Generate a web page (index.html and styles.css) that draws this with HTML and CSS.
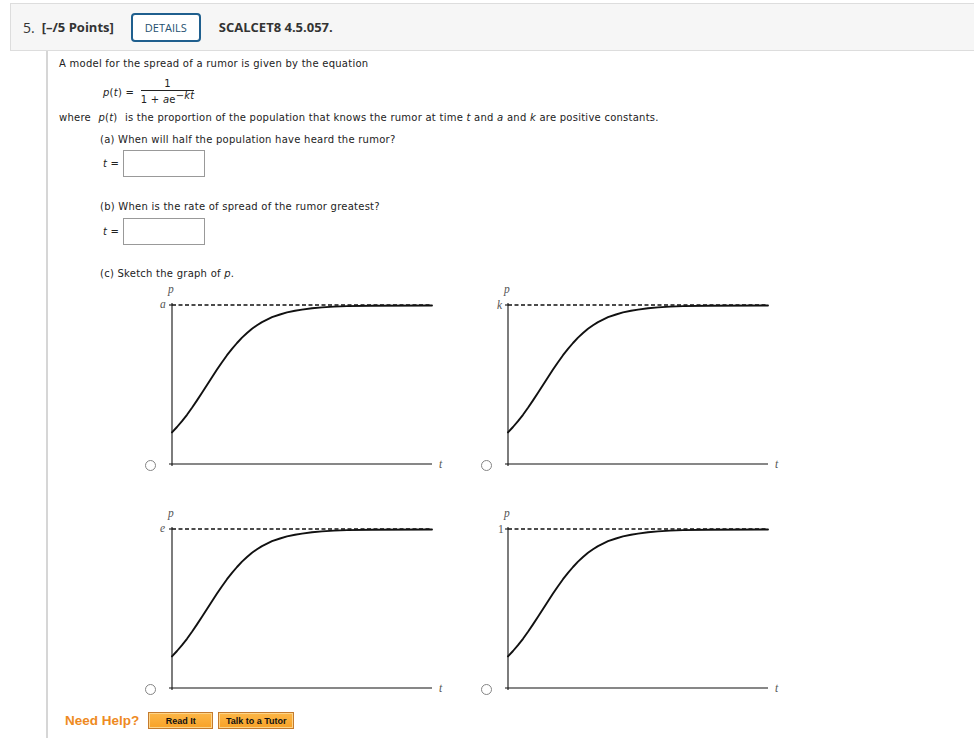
FILE: index.html
```html
<!DOCTYPE html>
<html>
<head>
<meta charset="utf-8">
<link rel="stylesheet" href="styles.css">
</head>
<body>
<div class="header">
  <span class="qnum">5.</span>
  <span class="points">[–/5 Points]</span>
  <span class="details">DETAILS</span>
  <span class="code">SCALCET8 4.5.057.</span>
</div>
<div class="question">
  <p class="line">A model for the spread of a rumor is given by the equation</p>
  <div class="equation">
    <span class="lhs"><i>p</i>(<i>t</i>) =</span>
    <span class="frac">
      <span class="num">1</span>
      <span class="den">1 + <i>a</i>e<sup>−<i>kt</i></sup></span>
    </span>
  </div>
  <p class="line where">where <span class="m"><i>p</i>(<i>t</i>)</span> is the proportion of the population that knows the rumor at time <i>t</i> and <i>a</i> and <i>k</i> are positive constants.</p>
  <p class="line part part-a">(a) When will half the population have heard the rumor?</p>
  <div class="answer"><span class="var"><i>t</i> =</span><span class="box"></span></div>
  <p class="line part part-b">(b) When is the rate of spread of the rumor greatest?</p>
  <div class="answer answer-b"><span class="var"><i>t</i> =</span><span class="box"></span></div>
  <p class="line part part-c">(c) Sketch the graph of <i>p</i>.</p>
  <div class="graphs">
    <div class="cell">
      <span class="radio"></span>
      <svg class="graph" width="292" height="190" viewBox="0 0 292 190">
        <line class="axis" x1="14" y1="22" x2="14" y2="185"/>
        <line class="axis" x1="11" y1="183" x2="274" y2="183"/>
        <line class="axis" x1="11" y1="24" x2="14" y2="24"/>
        <line class="dash" x1="14" y1="24" x2="274" y2="24"/>
        <polyline class="curve" points="14,151.4 19,146 24,140.2 29,133.8 34,126.8 39,119.4 44,111.8 49,104 54,96.2 59,88.6 64,81.2 69,74.2 74,67.8 79,62 84,56.6 89,52 94,47.8 99,44.2 104,41.1 114,36.2 122,33.5 129,31.4 137,29.8 144,28.6 154,27.2 164,26.4 176,25.6 189,25.1 214,24.7 274,24.5"/>
        <text class="lbl" x="10" y="12">p</text>
        <text class="lbl" x="2" y="27">a</text>
        <text class="lbl" x="281" y="187">t</text>
      </svg>
    </div>
    <div class="cell">
      <span class="radio"></span>
      <svg class="graph" width="292" height="190" viewBox="0 0 292 190">
        <line class="axis" x1="14" y1="22" x2="14" y2="185"/>
        <line class="axis" x1="11" y1="183" x2="274" y2="183"/>
        <line class="axis" x1="11" y1="24" x2="14" y2="24"/>
        <line class="dash" x1="14" y1="24" x2="274" y2="24"/>
        <polyline class="curve" points="14,151.4 19,146 24,140.2 29,133.8 34,126.8 39,119.4 44,111.8 49,104 54,96.2 59,88.6 64,81.2 69,74.2 74,67.8 79,62 84,56.6 89,52 94,47.8 99,44.2 104,41.1 114,36.2 122,33.5 129,31.4 137,29.8 144,28.6 154,27.2 164,26.4 176,25.6 189,25.1 214,24.7 274,24.5"/>
        <text class="lbl" x="10" y="12">p</text>
        <text class="lbl" x="3" y="28">k</text>
        <text class="lbl" x="281" y="187">t</text>
      </svg>
    </div>
    <div class="cell">
      <span class="radio"></span>
      <svg class="graph" width="292" height="190" viewBox="0 0 292 190">
        <line class="axis" x1="14" y1="22" x2="14" y2="185"/>
        <line class="axis" x1="11" y1="183" x2="274" y2="183"/>
        <line class="axis" x1="11" y1="24" x2="14" y2="24"/>
        <line class="dash" x1="14" y1="24" x2="274" y2="24"/>
        <polyline class="curve" points="14,151.4 19,146 24,140.2 29,133.8 34,126.8 39,119.4 44,111.8 49,104 54,96.2 59,88.6 64,81.2 69,74.2 74,67.8 79,62 84,56.6 89,52 94,47.8 99,44.2 104,41.1 114,36.2 122,33.5 129,31.4 137,29.8 144,28.6 154,27.2 164,26.4 176,25.6 189,25.1 214,24.7 274,24.5"/>
        <text class="lbl" x="10" y="12">p</text>
        <text class="lbl" x="2" y="27">e</text>
        <text class="lbl" x="281" y="187">t</text>
      </svg>
    </div>
    <div class="cell">
      <span class="radio"></span>
      <svg class="graph" width="292" height="190" viewBox="0 0 292 190">
        <line class="axis" x1="14" y1="22" x2="14" y2="185"/>
        <line class="axis" x1="11" y1="183" x2="274" y2="183"/>
        <line class="axis" x1="11" y1="24" x2="14" y2="24"/>
        <line class="dash" x1="14" y1="24" x2="274" y2="24"/>
        <polyline class="curve" points="14,151.4 19,146 24,140.2 29,133.8 34,126.8 39,119.4 44,111.8 49,104 54,96.2 59,88.6 64,81.2 69,74.2 74,67.8 79,62 84,56.6 89,52 94,47.8 99,44.2 104,41.1 114,36.2 122,33.5 129,31.4 137,29.8 144,28.6 154,27.2 164,26.4 176,25.6 189,25.1 214,24.7 274,24.5"/>
        <text class="lbl" x="10" y="12">p</text>
        <text class="num-lbl" x="4" y="28">1</text>
        <text class="lbl" x="281" y="187">t</text>
      </svg>
    </div>
  </div>
  <div class="help">
    <span class="need">Need Help?</span>
    <span class="btn btn-read">Read It</span>
    <span class="btn btn-tutor">Talk to a Tutor</span>
  </div>
</div>
</body>
</html>
```
FILE: styles.css
```css
html, body {
  margin: 0;
  padding: 0;
  background: #ffffff;
}
body {
  width: 974px;
  height: 738px;
  overflow: hidden;
}
.header {
  margin: 3px 0 0 10px;
  height: 46px;
  border: 1px solid #dddddd;
  border-right: none;
  background: #f6f6f6;
  display: flex;
  align-items: center;
  padding-left: 12px;
  font-family: "Open Sans", "Liberation Sans", sans-serif;
  color: #333333;
}
.qnum {
  font-size: 14px;
  margin-right: 7px;
}
.points {
  font-size: 13px;
  font-weight: bold;
  margin-right: 17px;
}
.details {
  box-sizing: border-box;
  width: 70px;
  height: 29px;
  border: 2px solid #1f5f8e;
  border-radius: 4px;
  display: flex;
  align-items: center;
  justify-content: center;
  font-size: 11px;
  color: #24506f;
  background: #ffffff;
  margin-right: 18px;
}
.code {
  font-size: 13px;
  font-weight: bold;
}
.question {
  margin-left: 46px;
  border-left: 2px solid #d6d6d6;
  padding: 6px 0 12px 11px;
  font-family: "DejaVu Sans", Verdana, sans-serif;
  font-size: 10px;
  letter-spacing: 0.25px;
  color: #222222;
}
.line {
  margin: 0;
  line-height: 14px;
  white-space: nowrap;
}
.equation {
  margin: 6px 0 0 44px;
  display: flex;
  align-items: center;
}
.lhs {
  line-height: 14px;
  margin-right: 7px;
  padding-top: 1px;
}
.frac {
  display: inline-flex;
  flex-direction: column;
  align-items: center;
  width: 53px;
}
.num {
  line-height: 13px;
  width: 100%;
  text-align: center;
  border-bottom: 1px solid #222222;
}
.den {
  line-height: 14px;
  padding-top: 2px;
  white-space: nowrap;
}
.den sup {
  font-size: 10px;
  line-height: 0;
  vertical-align: 4px;
}
.where {
  margin-top: 4px;
}
.m {
  margin: 0 4px 0 4px;
}
.part {
  margin-left: 41px;
}
.part-a {
  margin-top: 8px;
}
.part-b {
  margin-top: 23px;
}
.part-c {
  margin-top: 22px;
}
.answer {
  display: flex;
  align-items: center;
  margin: 3px 0 0 44px;
}
.answer-b {
  margin-top: 4px;
}
.var {
  width: 20px;
  line-height: 14px;
}
.box {
  box-sizing: border-box;
  width: 82px;
  height: 27px;
  border: 1px solid #999999;
  background: #ffffff;
}
.graphs {
  margin-left: 86px;
  display: grid;
  grid-template-columns: 305px 305px;
  column-gap: 31px;
  row-gap: 34px;
}
.cell {
  display: flex;
  align-items: flex-end;
}
.radio {
  box-sizing: border-box;
  width: 11px;
  height: 11px;
  border: 1px solid #858585;
  border-radius: 50%;
  background: #ffffff;
  margin-right: 2px;
  flex: none;
}
.graph {
  display: block;
  flex: none;
}
.axis {
  stroke: #111111;
  stroke-width: 1.1;
}
.dash {
  stroke: #111111;
  stroke-width: 1.5;
  stroke-dasharray: 4 2.5;
}
.curve {
  fill: none;
  stroke: #111111;
  stroke-width: 1.9;
  stroke-linejoin: round;
  stroke-linecap: round;
}
.lbl {
  font-family: "Liberation Serif", "DejaVu Serif", serif;
  font-style: italic;
  font-size: 11.5px;
  fill: #555555;
}
.num-lbl {
  font-family: "Liberation Serif", "DejaVu Serif", serif;
  font-size: 11.5px;
  fill: #555555;
}
.help {
  display: flex;
  align-items: center;
  margin: 17px 0 0 6px;
  height: 17px;
  letter-spacing: 0;
}
.need {
  font-family: "Liberation Sans", Arial, sans-serif;
  font-size: 13.5px;
  font-weight: bold;
  color: #ee8a22;
  margin-right: 9px;
}
.btn {
  box-sizing: border-box;
  height: 17px;
  display: flex;
  align-items: center;
  justify-content: center;
  border: 1px solid #c47b2e;
  box-shadow: inset 0 0 0 1px #fdd489;
  background: linear-gradient(#fcb748, #f8a127);
  font-family: "Liberation Sans", Arial, sans-serif;
  font-size: 9px;
  font-weight: bold;
  color: #111111;
}
.btn-read {
  width: 65px;
  margin-right: 5px;
}
.btn-tutor {
  width: 76px;
}
```
